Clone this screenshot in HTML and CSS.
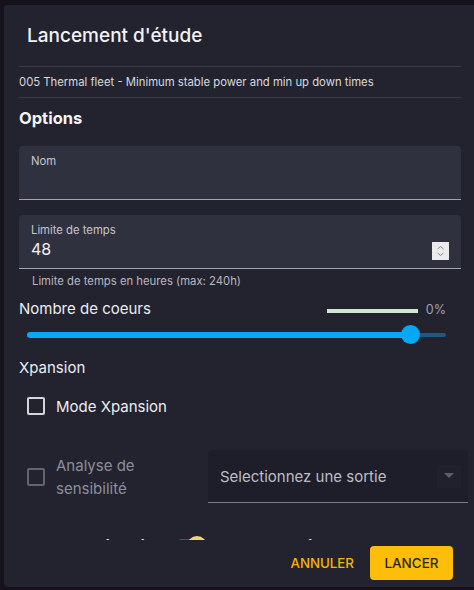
FILE: index.html
```html
<html>
<head>
<meta charset="utf-8">
<link rel="stylesheet" href="styles.css">
</head>
<body>
<div class="dialog">
	<div class="dialogTitle">Lancement d'étude</div>
	<div class="dialogContent">
		<div class="divider"></div>
		<div class="studyName">005 Thermal fleet - Minimum stable power and min up down times</div>
		<div class="divider"></div>
		<div class="sectionTitle">Options</div>

		<div class="field">
			<div class="fieldLabel">Nom</div>
			<div class="fieldValue"></div>
		</div>

		<div class="field timeField">
			<div class="fieldLabel">Limite de temps</div>
			<div class="fieldRow">
				<div class="fieldValue">48</div>
				<span class="spinner">
					<svg width="17" height="18" viewBox="0 0 17 18">
						<path d="M5.5 7 L8.5 4.5 L11.5 7" fill="none" stroke="#8a8a8a" stroke-width="1"/>
						<path d="M5.5 11 L8.5 13.5 L11.5 11" fill="none" stroke="#8a8a8a" stroke-width="1"/>
					</svg>
				</span>
			</div>
		</div>
		<div class="helper">Limite de temps en heures (max: 240h)</div>

		<div class="coresRow">
			<span class="rowLabel">Nombre de coeurs</span>
			<span class="usage"><span class="usageBar"></span><span class="usageText">0%</span></span>
		</div>
		<div class="slider">
			<div class="sliderTrack"></div>
			<div class="sliderFill"></div>
			<div class="sliderThumb"></div>
		</div>

		<div class="rowLabel xpansionTitle">Xpansion</div>
		<div class="checkRow">
			<span class="checkbox"></span>
			<span class="checkText">Mode Xpansion</span>
		</div>

		<div class="sensRow">
			<div class="checkRow disabled">
				<span class="checkbox"></span>
				<span class="checkText">Analyse de<br>sensibilité</span>
			</div>
			<div class="select">
				<span class="selectText">Selectionnez une sortie</span>
				<span class="selectArrow">
					<svg width="10" height="6" viewBox="0 0 10 6"><path d="M0 0 L10 0 L5 5 Z" fill="#5d5e69"/></svg>
				</span>
			</div>
		</div>

		<div class="modeRow">
			<span class="rowLabel">Mode de Rôle Pôle</span>
			<span class="switch"><span class="switchTrack"></span><span class="switchThumb"></span></span>
			<span class="rowLabel">Mode de Coût</span>
		</div>
	</div>
	<div class="dialogActions">
		<button class="textButton">ANNULER</button>
		<button class="mainButton">LANCER</button>
	</div>
</div>
</body>
</html>
```

FILE: styles.css
```css
body
{
	margin: 0;
	background-color: #16111a;
	overflow: hidden;
	font-family: Inter, "Noto Sans", sans-serif;
	color: #e6e6ea;
}
.dialog
{
	margin: 5px 0 0 4px;
	width: 470px;
	height: 582px;
	background-color: #22232f;
	border-radius: 4px 0 0 4px;
	display: flex;
	flex-direction: column;
}
.dialogTitle
{
	height: 61px;
	box-sizing: border-box;
	padding: 15px 0 0 23px;
	font-size: 19px;
	line-height: 32px;
	font-weight: 500;
	color: #f2f2f4;
}
.dialogContent
{
	height: 474px;
	overflow: hidden;
	padding: 0 13px 0 15px;
}
.divider
{
	height: 1px;
	background-color: #393a47;
}
.studyName
{
	font-size: 11.3px;
	line-height: 30px;
	color: #d9d9de;
	white-space: nowrap;
}
.sectionTitle
{
	font-size: 16.5px;
	font-weight: 700;
	line-height: 40px;
	color: #f4f4f6;
	margin-bottom: 8px;
}
.field
{
	background-color: #30313e;
	border-bottom: 1px solid #a3a4ae;
	border-radius: 4px 4px 0 0;
	padding: 8px 12px 0 12px;
	height: 45px;
}
.timeField
{
	margin-top: 15px;
}
.fieldLabel
{
	font-size: 11.3px;
	line-height: 15px;
	color: #c4c4cb;
}
.fieldRow
{
	display: flex;
	align-items: center;
	justify-content: space-between;
}
.fieldValue
{
	font-size: 16px;
	line-height: 22px;
	color: #f0f0f2;
}
.spinner
{
	width: 17px;
	height: 18px;
	background-color: #ebebed;
	display: flex;
	margin-top: 4px;
}
.helper
{
	font-size: 11.3px;
	line-height: 16px;
	color: #b7b7bf;
	padding-left: 13px;
	margin-top: 4px;
}
.coresRow
{
	display: flex;
	justify-content: space-between;
	align-items: center;
	margin-top: 9px;
	padding-right: 15px;
}
.rowLabel
{
	font-size: 15px;
	line-height: 22px;
	color: #ececf0;
}
.usage
{
	display: flex;
	align-items: center;
	gap: 8px;
}
.usageBar
{
	width: 91px;
	height: 4px;
	background-color: #cfe8cf;
	margin-top: 3px;
}
.usageText
{
	font-size: 12.5px;
	color: #a2a2ab;
}
.slider
{
	position: relative;
	height: 20px;
	margin: 5px 15px 0 8px;
}
.sliderTrack
{
	position: absolute;
	left: 0;
	right: 0;
	top: 8px;
	height: 4px;
	border-radius: 2px;
	background-color: #1e5a80;
}
.sliderFill
{
	position: absolute;
	left: 0;
	top: 7px;
	width: 384px;
	height: 6px;
	border-radius: 3px;
	background-color: #03a9f4;
}
.sliderThumb
{
	position: absolute;
	left: 374px;
	top: 0;
	width: 19px;
	height: 19px;
	border-radius: 50%;
	background-color: #03a9f4;
}
.xpansionTitle
{
	margin-top: 12px;
}
.checkRow
{
	display: flex;
	align-items: center;
	height: 40px;
	margin-top: 7px;
	padding-left: 8px;
}
.checkbox
{
	width: 14px;
	height: 14px;
	border: 2px solid #d4d4d9;
	border-radius: 2px;
	margin-right: 11px;
}
.checkText
{
	font-size: 15px;
	line-height: 23px;
	color: #ececf0;
}
.sensRow
{
	display: flex;
	justify-content: space-between;
	align-items: center;
	margin-top: 24px;
	margin-right: -7px;
}
.sensRow .checkRow
{
	margin-top: 0;
}
.disabled .checkbox
{
	border-color: #62636e;
}
.disabled .checkText
{
	color: #8d8e98;
}
.select
{
	width: 260px;
	height: 53px;
	background-color: #1d1e29;
	border-bottom: 1px solid #7b7c87;
	border-radius: 4px 4px 0 0;
	display: flex;
	align-items: center;
	justify-content: space-between;
	padding: 0 7px 0 12px;
	box-sizing: border-box;
}
.selectText
{
	font-size: 15px;
	color: #bdbdc5;
}
.selectArrow
{
	width: 24px;
	height: 23px;
	background-color: #20212c;
	display: flex;
	align-items: center;
	justify-content: center;
}
.modeRow
{
	display: flex;
	align-items: center;
	margin-top: 32px;
	padding-left: 8px;
}
.modeRow .rowLabel:first-child
{
	width: 148px;
}
.switch
{
	position: relative;
	width: 32px;
	height: 20px;
	margin-right: 12px;
}
.switchTrack
{
	position: absolute;
	left: 0;
	right: 0;
	top: 3px;
	height: 14px;
	border-radius: 7px;
	background-color: #6e4a3e;
}
.switchThumb
{
	position: absolute;
	left: 12px;
	top: 0;
	width: 20px;
	height: 20px;
	border-radius: 50%;
	background-color: #f6d27a;
}
.dialogActions
{
	display: flex;
	justify-content: flex-end;
	align-items: center;
	gap: 8px;
	padding: 6px 21px 0 0;
}
.textButton
{
	background: none;
	border: none;
	font-family: Inter, sans-serif;
	font-size: 13.3px;
	font-weight: 500;
	color: #f3b604;
	padding: 8px 8px;
	height: 34px;
}
.mainButton
{
	background-color: #fdbe0a;
	border: none;
	border-radius: 4px;
	font-family: Inter, sans-serif;
	font-size: 13.5px;
	font-weight: 500;
	color: #2a2619;
	width: 83px;
	height: 34px;
}
```
